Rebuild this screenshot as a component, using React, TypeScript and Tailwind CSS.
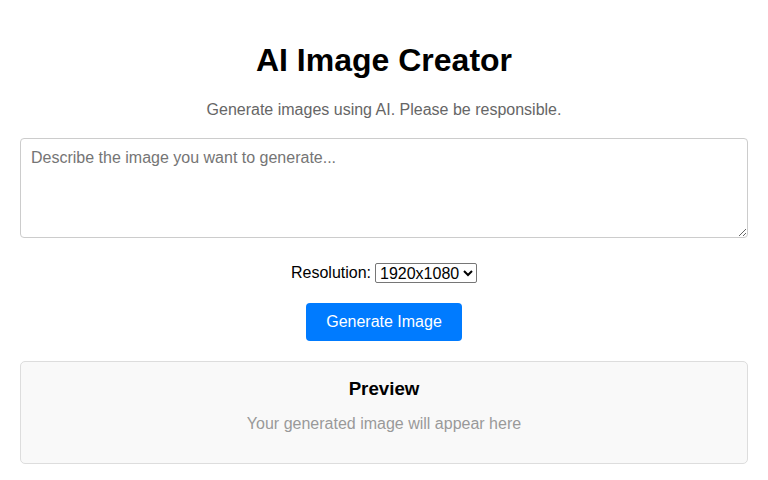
export default function App() {
  return (
    <div className="flex min-h-screen flex-col bg-white px-[20px] pt-[42px] font-['Liberation_Sans',Arial,sans-serif] text-[16px] leading-[normal] text-black">
      <h1 className="text-center text-[32px] font-bold leading-[normal]">AI Image Creator</h1>
      <p className="mt-[22px] text-center text-[#666]">Generate images using AI. Please be responsible.</p>

      <textarea
        className="mt-[19px] h-[100px] w-full rounded-[4px] border border-[#ccc] px-[10px] py-[10px] leading-[normal] placeholder:text-[#757575]"
        placeholder="Describe the image you want to generate..."
      />

      <div className="mt-[25px] flex h-[20px] items-center justify-center">
        <label htmlFor="res" className="mr-[4px]">
          Resolution:
        </label>
        <select
          id="res"
          defaultValue="1920x1080"
          className="h-[20px] rounded-[2px] border border-[#767676] bg-white text-[16px] leading-[normal] text-black"
        >
          <option value="512x512">512x512</option>
          <option value="1024x1024">1024x1024</option>
          <option value="1920x1080">1920x1080</option>
        </select>
      </div>

      <button className="mt-[20px] self-center rounded-[4px] bg-[#007bff] px-[20px] py-[10px] text-white">
        Generate Image
      </button>

      <div className="mt-[20px] rounded-[5px] border border-[#ddd] bg-[#f9f9f9] px-[20px] pb-[30px] pt-[16px] text-center">
        <h3 className="text-[18.72px] font-bold leading-[normal]">Preview</h3>
        <p className="mt-[15px] text-[#999]">Your generated image will appear here</p>
      </div>
    </div>
  );
}
